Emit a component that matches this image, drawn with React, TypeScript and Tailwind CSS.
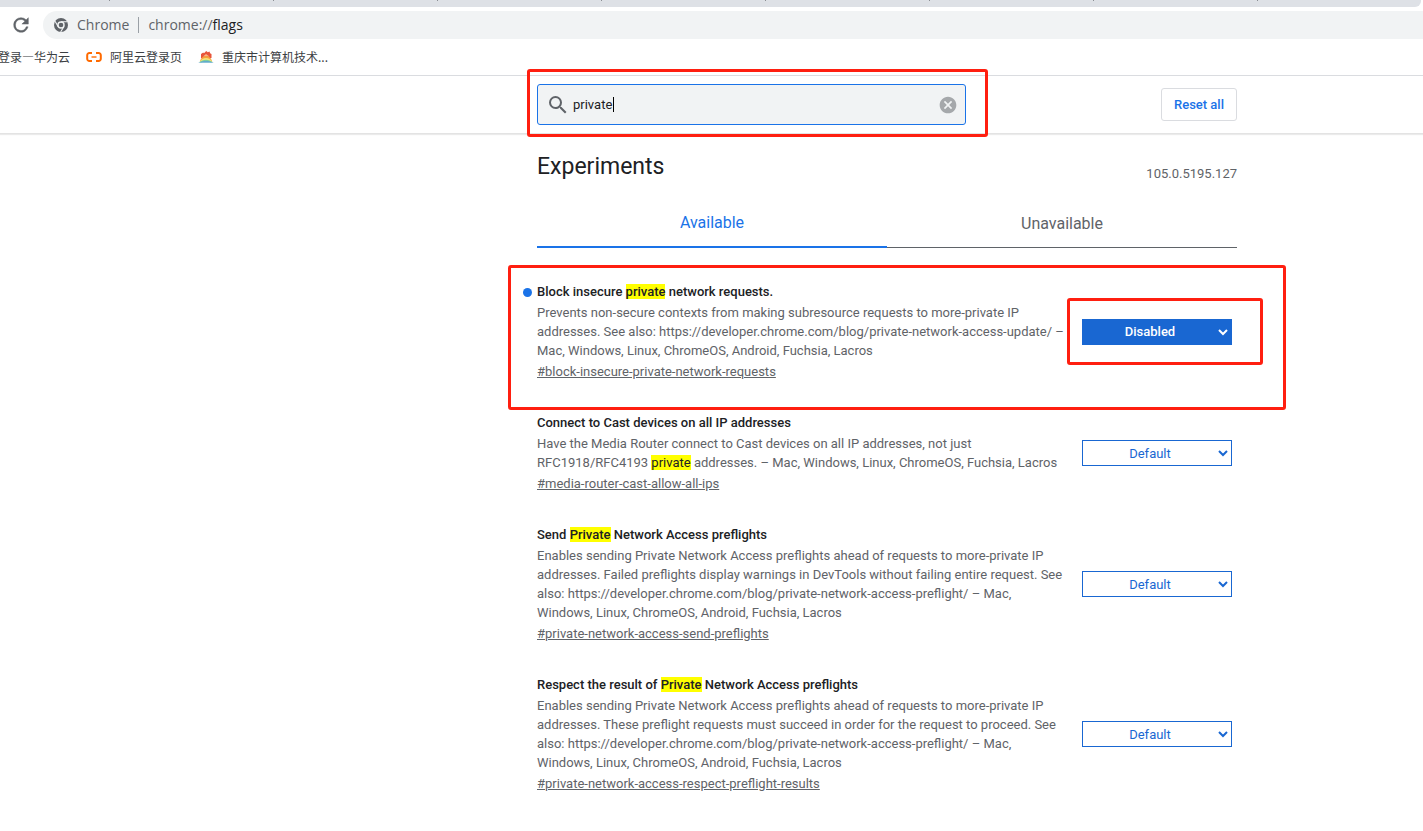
import { useId, useState } from "react";
import type { ReactNode } from "react";

interface Experiment {
  id: string;
  title: string;
  description: string;
  platforms: string;
  highlightBody?: boolean;
  value: "Default" | "Enabled" | "Disabled";
}

const EXPERIMENTS: Experiment[] = [
  {
    id: "block-insecure-private-network-requests",
    title: "Block insecure private network requests.",
    description:
      "Prevents non-secure contexts from making subresource requests to more-private IP addresses. See also: https://developer.chrome.com/blog/private-network-access-update/",
    platforms: "Mac, Windows, Linux, ChromeOS, Android, Fuchsia, Lacros",
    value: "Disabled",
  },
  {
    id: "media-router-cast-allow-all-ips",
    title: "Connect to Cast devices on all IP addresses",
    description:
      "Have the Media Router connect to Cast devices on all IP addresses, not just RFC1918/RFC4193 private addresses.",
    platforms: "Mac, Windows, Linux, ChromeOS, Fuchsia, Lacros",
    highlightBody: true,
    value: "Default",
  },
  {
    id: "private-network-access-send-preflights",
    title: "Send Private Network Access preflights",
    description:
      "Enables sending Private Network Access preflights ahead of requests to more-private IP addresses. Failed preflights display warnings in DevTools without failing entire request. See also: https://developer.chrome.com/blog/private-network-access-preflight/",
    platforms: "Mac, Windows, Linux, ChromeOS, Android, Fuchsia, Lacros",
    value: "Default",
  },
  {
    id: "private-network-access-respect-preflight-results",
    title: "Respect the result of Private Network Access preflights",
    description:
      "Enables sending Private Network Access preflights ahead of requests to more-private IP addresses. These preflight requests must succeed in order for the request to proceed. See also: https://developer.chrome.com/blog/private-network-access-preflight/",
    platforms: "Mac, Windows, Linux, ChromeOS, Android, Fuchsia, Lacros",
    value: "Default",
  },
];

const TAB_COUNT = 8;

// Marks the first hit only, the same way the flags page does
function highlight(text: string, term: string): ReactNode {
  const at = term ? text.toLowerCase().indexOf(term.toLowerCase()) : -1;
  if (at < 0) return text;
  return (
    <>
      {text.slice(0, at)}
      <mark className="bg-[#ff0] text-[#202124]">{text.slice(at, at + term.length)}</mark>
      {text.slice(at + term.length)}
    </>
  );
}

function ReloadIcon() {
  return (
    <svg viewBox="0 0 24 24" className="size-[22px]" fill="#5f6368" stroke="#5f6368" strokeWidth="0.5">
      <path d="M17.65 6.35A7.96 7.96 0 0 0 12 4a8 8 0 1 0 7.73 10h-2.08A6 6 0 1 1 12 6c1.66 0 3.14.69 4.22 1.78L13 11h7V4l-2.35 2.35z" />
    </svg>
  );
}

function ChromeIcon() {
  return (
    <svg viewBox="0 0 24 24" className="size-[14px] shrink-0">
      <circle cx="12" cy="12" r="12" fill="#5f6368" />
      <circle cx="12" cy="12" r="6.4" fill="#f1f3f4" />
      <circle cx="12" cy="12" r="4" fill="#5f6368" />
      <path
        d="M12 6.4h10.8M7.2 14.8 1.8 5.6M16.8 14.8 11.4 24"
        stroke="#f1f3f4"
        strokeWidth="1.8"
        fill="none"
      />
    </svg>
  );
}

function AliyunIcon() {
  return (
    <svg viewBox="0 0 16 12" className="h-3 w-4 shrink-0" fill="none" stroke="#ff6a00">
      <path
        d="M6 2H3.4A2.2 2.2 0 0 0 1.2 4.2v3.6A2.2 2.2 0 0 0 3.4 10H6M10 2h2.6a2.2 2.2 0 0 1 2.2 2.2v3.6a2.2 2.2 0 0 1-2.2 2.2H10"
        strokeWidth="2"
      />
      <path d="M5.5 6h5" strokeWidth="1.4" />
    </svg>
  );
}

function RainbowIcon() {
  return (
    <svg viewBox="0 0 16 14" className="h-[14px] w-4 shrink-0">
      <path d="M3 8V4l2.2-1.4.8.7L8.2 1l1.6 1.2L11.500 1.500l.6 1.800L13.500 4v4z" fill="#e8553a" />
      <path d="M5 6.500 8 4l3.500 2.500z" fill="#f6b58a" />
      <path d="M2 11C3 7.500 5.500 6 8 6s5 1.500 6 5z" fill="#f7a03c" />
      <path d="M1.500 12C3 9.300 5.500 8 8 8s5 1.300 6.500 4z" fill="#f6e27a" />
      <path d="M1 12.600C3 10.600 5.500 9.800 8 9.800s5 .8 7 2.800z" fill="#7fcf9a" />
      <path d="M0 13C3 11.700 5.500 11.300 8 11.300s5 .4 8 1.700c-3-.5-5.500-.6-8-.6s-5 .1-8 .6z" fill="#5b9fe0" />
    </svg>
  );
}

function SearchIcon() {
  return (
    <svg viewBox="0 0 24 24" className="size-6 shrink-0" fill="#5f6368">
      <path d="M15.5 14h-.79l-.28-.27A6.47 6.47 0 0 0 16 9.500 6.500 6.500 0 1 0 9.500 16c1.610 0 3.090-.59 4.230-1.570l.27.28v.79l5 4.990L20.490 19l-4.990-5zm-6 0C7.010 14 5 11.990 5 9.500S7.010 5 9.500 5 14 7.010 14 9.500 11.990 14 9.500 14z" />
    </svg>
  );
}

function ClearIcon() {
  return (
    <svg viewBox="0 0 24 24" className="size-5" fill="#a5a8ab">
      <path d="M12 2C6.470 2 2 6.470 2 12s4.470 10 10 10 10-4.470 10-10S17.530 2 12 2zm5 13.590L15.590 17 12 13.410 8.410 17 7 15.590 10.590 12 7 8.410 8.410 7 12 10.590 15.590 7 17 8.410 13.410 12 17 15.590z" />
    </svg>
  );
}

function BrowserBar() {
  return (
    <div className="bg-white">
      <div className="mr-0.5 flex h-[7px] gap-[163px] overflow-hidden rounded-br-md bg-[#dee1e6] pl-[109px]">
        {Array.from({ length: TAB_COUNT }, (_, i) => (
          <span key={i} className="h-px w-px shrink-0 bg-[#8b8e93]" />
        ))}
      </div>

      <div className="flex items-center pt-1 pl-2.5 font-['Open_Sans','Noto_Sans',sans-serif] text-sm">
        <button type="button" aria-label="Reload" className="mr-[11px]">
          <ReloadIcon />
        </button>
        <div className="flex h-7 flex-1 items-center rounded-l-full bg-[#f1f3f4] pl-[11px] text-[#5f6368]">
          <ChromeIcon />
          <span className="ml-[9px]">Chrome</span>
          <span className="mx-[9px] h-4 w-px bg-[#9aa0a6]" />
          <span>
            chrome://<span className="text-[#202124]">flags</span>
          </span>
        </div>
      </div>

      <nav
        lang="zh-CN"
        className="flex h-[37px] items-center border-b border-[#dadce0] font-['Noto_Sans_CJK_SC',sans-serif] text-xs text-[#3c4043]"
      >
        <a href="#huawei" className="mr-4 flex w-[70px] justify-end overflow-hidden whitespace-nowrap">
          登录—华为云
        </a>
        <a href="#aliyun" className="mr-4 flex items-center gap-2 whitespace-nowrap">
          <AliyunIcon />
          阿里云登录页
        </a>
        <a href="#chongqing" className="flex items-center gap-2 whitespace-nowrap">
          <RainbowIcon />
          重庆市计算机技术...
        </a>
      </nav>
    </div>
  );
}

function Callout({ className }: { className: string }) {
  return (
    <div
      aria-hidden="true"
      className={`pointer-events-none absolute z-10 rounded-[3px] border-3 border-[#ff1f10] ${className}`}
    />
  );
}

function ExperimentRow({ item, term }: { item: Experiment; term: string }) {
  const [value, setValue] = useState<string>(item.value);
  const selectId = useId();
  const changed = value !== "Default";

  return (
    <li id={item.id} className="relative flex items-center justify-between pr-[5px]">
      {changed && (
        <span className="absolute top-[6px] -left-[14px] size-[9px] rounded-full bg-[#1a73e8]" />
      )}
      <div className="w-[530px] text-[13px] leading-[19px] text-[#5f6368]">
        <h2 className="font-medium text-[#202124]">
          <label htmlFor={selectId}>{highlight(item.title, term)}</label>
        </h2>
        <p className="mt-0.5">
          {item.highlightBody ? highlight(item.description, term) : item.description} –{" "}
          {item.platforms}
        </p>
        <a href={`#${item.id}`} className="mt-0.5 inline-block align-top underline">
          #{item.id}
        </a>
      </div>
      <div className="relative">
        <select
          id={selectId}
          value={value}
          onChange={(e) => setValue(e.target.value)}
          className={`block h-[26px] w-[150px] border border-[#1967d2] pr-0.5 text-[13px] [text-align-last:center] ${
            changed ? "bg-[#1967d2] font-medium text-white" : "bg-white text-[#1967d2]"
          }`}
        >
          <option>Default</option>
          <option>Enabled</option>
          <option>Disabled</option>
        </select>
        {changed && <Callout className="-top-[21px] -right-[31px] -bottom-[20px] -left-[15px]" />}
      </div>
      {changed && <Callout className="-top-[17px] -right-[49px] -bottom-[29px] -left-[29px]" />}
    </li>
  );
}

export default function App() {
  const [term, setTerm] = useState("private");

  return (
    <div className="min-h-screen overflow-x-hidden bg-white font-[Roboto,sans-serif] text-[13px] text-[#202124]">
      <BrowserBar />

      <header className="border-b border-[#e3e3e3] pl-[351px] shadow-[0_1px_1px_rgba(0,0,0,0.08)]">
        <div className="mx-auto flex w-full max-w-[700px] items-center justify-between py-2">
          <div className="relative flex h-[41px] w-[429px] items-center rounded-[3px] border border-[#1a73e8] bg-[#f1f3f4] pr-[7px] pl-2">
            <SearchIcon />
            <input
              type="text"
              aria-label="Search flags"
              value={term}
              onChange={(e) => setTerm(e.target.value)}
              className="ml-[3px] w-full bg-transparent text-[13px] outline-none"
            />
            {term === "private" && (
              <span className="absolute top-3 left-[75px] h-[15px] w-px bg-black" />
            )}
            <button type="button" aria-label="Clear search" onClick={() => setTerm("")}>
              <ClearIcon />
            </button>
            <Callout className="-top-[16px] -right-[23px] -bottom-[13px] -left-[11px]" />
          </div>
          <button
            type="button"
            className="h-[33px] w-[76px] rounded-[3px] border border-[#dadce0] font-medium text-[#1a73e8]"
          >
            Reset all
          </button>
        </div>
      </header>

      <div className="pl-[351px]">
        <main className="mx-auto w-full max-w-[700px] pt-[19px]">
          <div className="flex items-end justify-between">
            <h1 className="text-[23px] leading-7">Experiments</h1>
            <span className="leading-[14px] text-[#5f6368]">105.0.5195.127</span>
          </div>

          <div role="tablist" className="mt-[17px] grid grid-cols-2 text-base">
            <button
              type="button"
              role="tab"
              aria-selected="true"
              className="h-[50px] border-b-2 border-[#1a73e8] pt-0.5 text-[#1a73e8]"
            >
              Available
            </button>
            <button
              type="button"
              role="tab"
              aria-selected="false"
              className="h-[50px] border-b border-[#5f6368] pt-0.5 text-[#5f6368]"
            >
              Unavailable
            </button>
          </div>

          <ul className="mt-[34px] flex flex-col gap-8">
            {EXPERIMENTS.map((item) => (
              <ExperimentRow key={item.id} item={item} term={term} />
            ))}
          </ul>
        </main>
      </div>
    </div>
  );
}
